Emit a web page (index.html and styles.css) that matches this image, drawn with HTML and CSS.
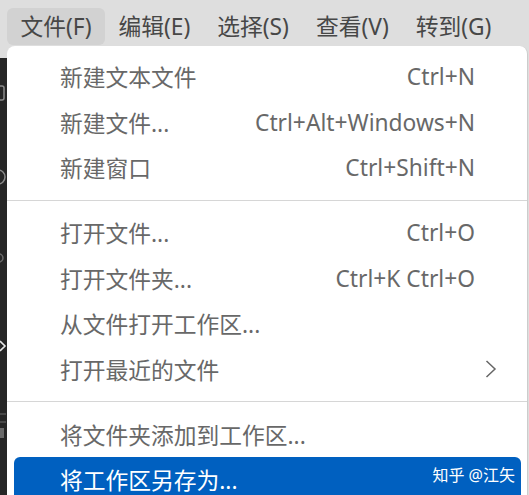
FILE: index.html
```html
<!DOCTYPE html>
<html lang="zh-CN">
<head>
    <meta charset="UTF-8">
    <title>文件菜单</title>
    <link rel="stylesheet" href="styles.css">
</head>
<body>
    <div class="menubar">
        <div class="menubar-item active">文件(F)</div>
        <div class="menubar-item">编辑(E)</div>
        <div class="menubar-item">选择(S)</div>
        <div class="menubar-item">查看(V)</div>
        <div class="menubar-item">转到(G)</div>
    </div>

    <div class="workbench">
        <div class="activitybar">
            <svg width="7" height="437" viewBox="0 0 7 437">
                <rect x="-6" y="28" width="10" height="14" rx="2" fill="none" stroke="#8a8a8a" stroke-width="1.5"/>
                <circle cx="-2" cy="119" r="7" fill="none" stroke="#8a8a8a" stroke-width="1.5"/>
                <circle cx="-1" cy="200" r="4" fill="none" stroke="#6a6a6a" stroke-width="1.5"/>
                <path d="M0 283 L5 288 L0 293" fill="none" stroke="#e8e8e8" stroke-width="1.6"/>
                <path d="M0 356 H6 M0 364 H6" stroke="#6a6a6a" stroke-width="1.2"/>
                <rect x="0" y="370" width="4" height="10" fill="#6a6a6a"/>
            </svg>
        </div>

        <div class="menu">
            <div class="menu-item"><span class="label">新建文本文件</span><span class="shortcut">Ctrl+N</span><span class="arrow"></span></div>
            <div class="menu-item"><span class="label">新建文件...</span><span class="shortcut">Ctrl+Alt+Windows+N</span><span class="arrow"></span></div>
            <div class="menu-item"><span class="label">新建窗口</span><span class="shortcut">Ctrl+Shift+N</span><span class="arrow"></span></div>
            <div class="separator"></div>
            <div class="menu-item"><span class="label">打开文件...</span><span class="shortcut">Ctrl+O</span><span class="arrow"></span></div>
            <div class="menu-item"><span class="label">打开文件夹...</span><span class="shortcut">Ctrl+K Ctrl+O</span><span class="arrow"></span></div>
            <div class="menu-item"><span class="label">从文件打开工作区...</span><span class="shortcut"></span><span class="arrow"></span></div>
            <div class="menu-item">
                <span class="label">打开最近的文件</span><span class="shortcut"></span>
                <span class="arrow">
                    <svg width="12" height="18" viewBox="0 0 12 18"><path d="M1.5 1 L10 9 L1.5 17" fill="none" stroke="#666" stroke-width="1.5"/></svg>
                </span>
            </div>
            <div class="separator"></div>
            <div class="menu-item"><span class="label">将文件夹添加到工作区...</span><span class="shortcut"></span><span class="arrow"></span></div>
            <div class="menu-item selected">
                <span class="label">将工作区另存为...</span><span class="shortcut"></span><span class="arrow"></span>
                <span class="watermark">知乎 @江矢</span>
            </div>
        </div>
    </div>
</body>
</html>
```

FILE: styles.css
```css
body {
    margin: 0;
    width: 529px;
    height: 495px;
    overflow: hidden;
    background: #dedede;
    font-family: "Noto Sans", "Noto Sans CJK SC", sans-serif;
    font-size: 22.75px;
}
.menubar {
    display: flex;
    height: 46px;
    padding-left: 7px;
    color: #474747;
}
.menubar-item {
    height: 37px;
    line-height: 37px;
    margin-top: 8px;
    padding: 0 13.5px;
    border-radius: 6px;
    white-space: nowrap;
}
.menubar-item.active {
    background: #d2d2d2;
}
.workbench {
    display: flex;
    height: 449px;
}
.activitybar {
    width: 7px;
    margin-top: 12px;
    background: #262626;
    overflow: hidden;
}
.activitybar svg {
    display: block;
}
.menu {
    width: 520px;
    background: #fff;
    border-right: 1px solid #cccccc;
    border-radius: 8px 8px 0 0;
    padding-top: 8px;
    color: #686868;
}
.menu-item {
    position: relative;
    display: flex;
    align-items: center;
    height: 45.5px;
    margin: 0 6px 0 7px;
    padding: 0 24px 0 46px;
    border-radius: 6px;
    white-space: nowrap;
}
.label {
    flex: 1;
}
.arrow {
    width: 22px;
    display: flex;
    justify-content: flex-end;
}
.arrow svg {
    display: block;
}
.separator {
    height: 1px;
    background: #d6d6d6;
    margin: 9px 0 9.5px;
}
.selected {
    background: #0060c0;
    color: #fff;
}
.watermark {
    position: absolute;
    right: 6px;
    top: 5px;
    font-size: 16px;
    color: #fff;
}
```
